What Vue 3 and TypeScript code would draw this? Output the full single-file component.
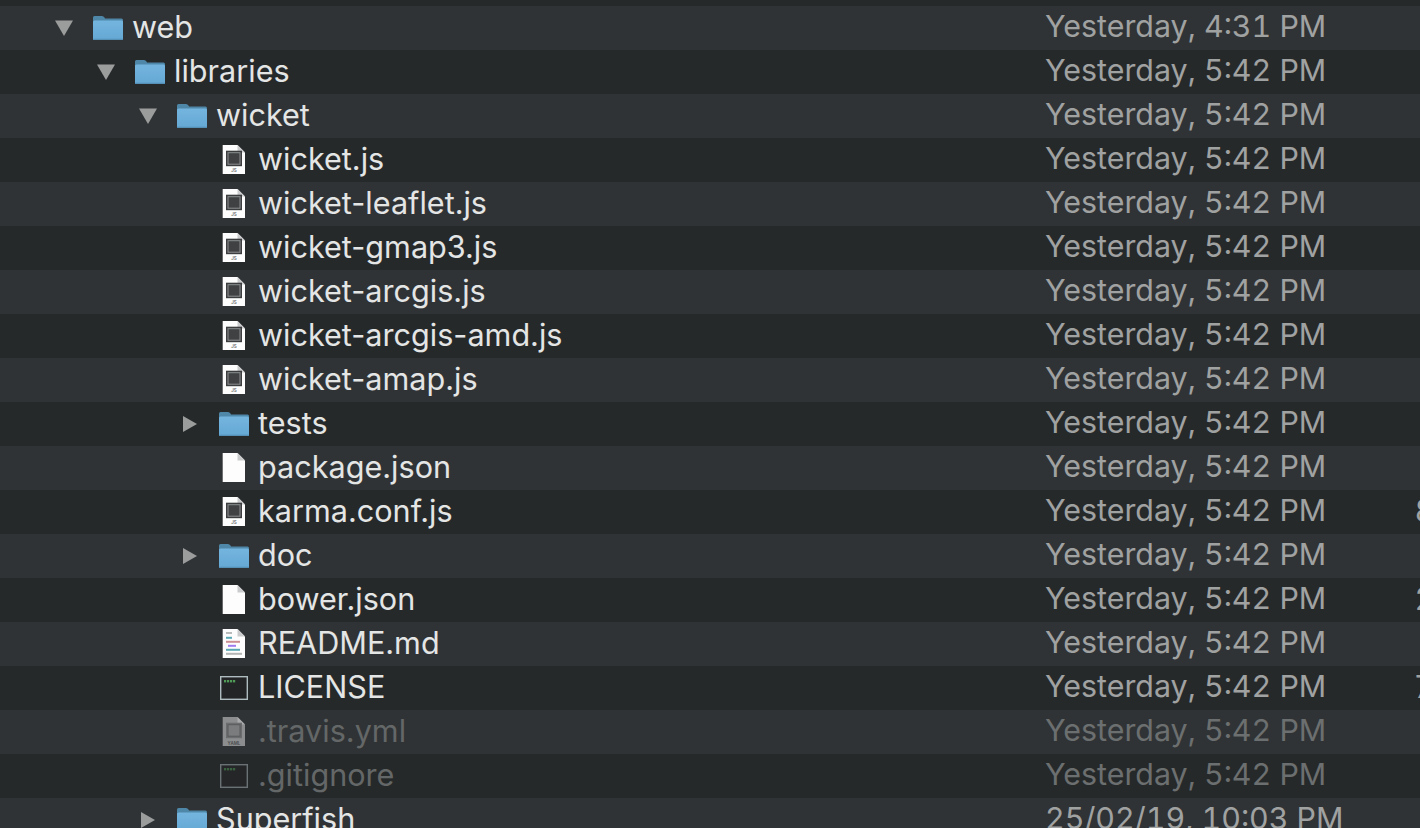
<script setup lang="ts">
type Kind = 'folder' | 'js' | 'blank' | 'md' | 'term' | 'yaml'
interface Row {
  name: string
  depth: number
  kind: Kind
  open?: boolean
  date?: string
  size?: string
  dim?: boolean
}
const D = 'Yesterday, 5:42 PM'
const rows: Row[] = [
  { name: 'web', depth: 0, kind: 'folder', open: true, date: 'Yesterday, 4:31 PM' },
  { name: 'libraries', depth: 1, kind: 'folder', open: true },
  { name: 'wicket', depth: 2, kind: 'folder', open: true },
  { name: 'wicket.js', depth: 3, kind: 'js' },
  { name: 'wicket-leaflet.js', depth: 3, kind: 'js' },
  { name: 'wicket-gmap3.js', depth: 3, kind: 'js' },
  { name: 'wicket-arcgis.js', depth: 3, kind: 'js' },
  { name: 'wicket-arcgis-amd.js', depth: 3, kind: 'js' },
  { name: 'wicket-amap.js', depth: 3, kind: 'js' },
  { name: 'tests', depth: 3, kind: 'folder', open: false },
  { name: 'package.json', depth: 3, kind: 'blank' },
  { name: 'karma.conf.js', depth: 3, kind: 'js', size: '8' },
  { name: 'doc', depth: 3, kind: 'folder', open: false },
  { name: 'bower.json', depth: 3, kind: 'blank', size: '2' },
  { name: 'README.md', depth: 3, kind: 'md' },
  { name: 'LICENSE', depth: 3, kind: 'term', size: '7' },
  { name: '.travis.yml', depth: 3, kind: 'yaml', dim: true },
  { name: '.gitignore', depth: 3, kind: 'term', dim: true },
  { name: 'Superfish', depth: 2, kind: 'folder', open: false, date: '25/02/19, 10:03 PM' }
]
const indent = (r: Row) => ({ paddingLeft: `${55 + r.depth * 42}px` })
const PAGE = 'M3.7 0H18.5L26 7.5V29H3.7Z'
const FOLD = 'M18.5 0V7.5H26Z'
</script>

<template>
  <div class="finder">
    <div class="strip"></div>
    <div
      v-for="(r, i) in rows"
      :key="r.name"
      class="row"
      :class="{ alt: i % 2 === 1, dim: r.dim }"
      :style="indent(r)"
    >
      <span class="disclosure">
        <svg v-if="r.open === true" width="18" height="18" viewBox="0 0 18 18">
          <path d="M0 1.5H18L9 17Z" fill="#9b9d9d" />
        </svg>
        <svg v-else-if="r.open === false" width="18" height="18" viewBox="0 0 18 18">
          <path d="M2 1V17L16 9Z" fill="#9b9d9d" />
        </svg>
      </span>

      <svg class="icon" width="30" height="30" viewBox="0 0 30 30">
        <template v-if="r.kind === 'folder'">
          <defs>
            <linearGradient :id="`folder-${i}`" x1="0" y1="0" x2="0" y2="1">
              <stop offset="0" stop-color="#74b5df" />
              <stop offset="1" stop-color="#64a8d4" />
            </linearGradient>
          </defs>
          <path d="M0 8V4.5Q0 3 1.5 3H9Q10.5 3 11.5 4.5L12 5.5H28.5Q30 5.5 30 7V10H0Z" fill="#4f87a8" />
          <rect x="0" y="7.6" width="30" height="19.4" rx="1.5" :fill="`url(#folder-${i})`" />
          <rect x="0" y="25.8" width="30" height="1.2" rx=".6" fill="#5590b6" />
        </template>

        <template v-else-if="r.kind === 'js'">
          <path :d="PAGE" fill="#fdfdfd" />
          <path :d="FOLD" fill="#c9cbcc" />
          <rect x="7" y="5.7" width="16" height="15.5" fill="#3b3d3e" />
          <rect x="9" y="7.7" width="12" height="11.5" fill="#3f4142" stroke="#8d8f90" stroke-width="1" />
          <text x="15" y="27" class="tiny" fill="#666">JS</text>
        </template>

        <template v-else-if="r.kind === 'yaml'">
          <path :d="PAGE" fill="#8b8d8e" />
          <path :d="FOLD" fill="#a8aaab" />
          <rect x="7" y="5.7" width="16" height="15.5" fill="#6b6d6e" />
          <rect x="9" y="7.7" width="12" height="11.5" fill="#7a7c7d" stroke="#595b5c" stroke-width="1" />
          <text x="15" y="27.5" class="tiny" fill="#4a4c4d">YAML</text>
        </template>

        <template v-else-if="r.kind === 'blank'">
          <path :d="PAGE" fill="#fdfdfd" />
          <path :d="FOLD" fill="#c9cbcc" />
        </template>

        <template v-else-if="r.kind === 'md'">
          <path :d="PAGE" fill="#fdfdfd" />
          <path :d="FOLD" fill="#c9cbcc" />
          <rect x="7" y="3" width="6" height="2" fill="#b9bbbb" />
          <rect x="7" y="7.8" width="6" height="2" fill="#5ba8b4" />
          <rect x="7" y="11.8" width="14" height="2" fill="#cc8f94" />
          <rect x="9" y="15.8" width="8" height="2" fill="#a07cf0" />
          <rect x="7" y="19.8" width="14" height="2" fill="#5ba8b4" />
          <rect x="7" y="23.8" width="16" height="2" fill="#b4b6b6" />
        </template>

        <template v-else-if="r.kind === 'term'">
          <g :opacity="r.dim ? 0.5 : 1">
            <rect x="1.7" y="3.7" width="26.6" height="22.6" fill="#232425" stroke="#aebbbf" stroke-width="1.4" />
            <rect x="5" y="7" width="2.2" height="2.4" fill="#4f9a56" />
            <rect x="8" y="7" width="2.2" height="2.4" fill="#4f9a56" />
            <rect x="11" y="7" width="2.2" height="2.4" fill="#4f9a56" />
            <rect x="14" y="7" width="2.2" height="2.4" fill="#4f9a56" />
          </g>
        </template>
      </svg>

      <span class="name">{{ r.name }}</span>
      <span class="date">{{ r.date ?? D }}</span>
      <span class="size">{{ r.size }}</span>
    </div>
  </div>
</template>

<style scoped>
.finder {
  height: 828px;
  width: 1420px;
  overflow: hidden;
  background: #26292a;
  font-family: Inter, "Liberation Sans", sans-serif;
  font-size: 30.6px;
}
.strip {
  height: 6px;
  background: #26292a;
}
.row {
  display: flex;
  align-items: center;
  height: 44px;
  overflow: hidden;
  white-space: nowrap;
  background: #303335;
  color: #e4e5e5;
}
.row.alt {
  background: #26292a;
}
.row.dim {
  color: #646767;
}
.disclosure {
  flex: none;
  width: 38px;
  height: 18px;
  display: flex;
}
.icon {
  flex: none;
  margin-right: 9px;
}
.name {
  flex: 1;
  min-width: 0;
  padding-bottom: 4px;
}
.date {
  flex: none;
  width: 370px;
  padding-bottom: 4px;
  color: #a0a2a2;
  font-size: 30.4px;
  font-variant-numeric: tabular-nums;
}
.row.dim .date {
  color: #6c6f6f;
}
.size {
  flex: none;
  width: 5px;
  padding-bottom: 4px;
  color: #a0a2a2;
}
.tiny {
  font-size: 4.5px;
  text-anchor: middle;
  font-weight: 600;
}
</style>
